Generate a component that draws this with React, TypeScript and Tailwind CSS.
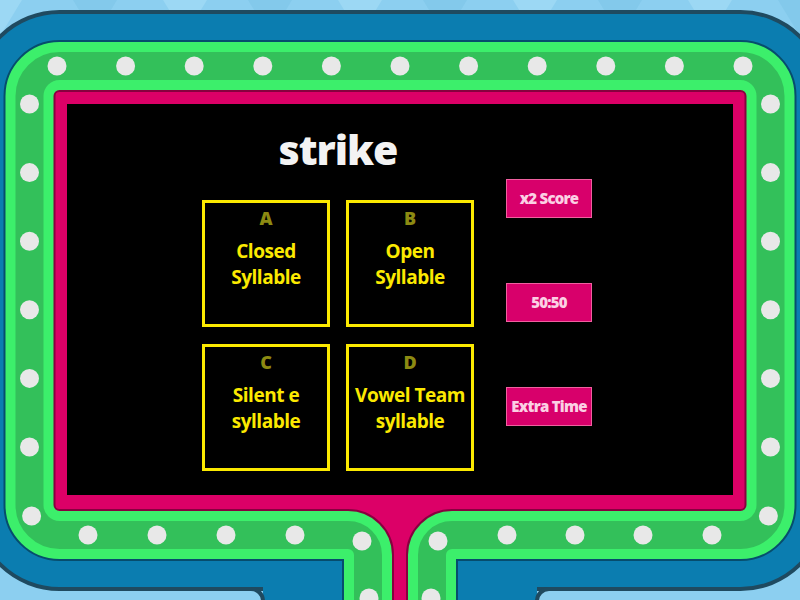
import React from 'react';

// Centre line of the lamp strip, with the stem running down under the screen
const FRAME_PATH =
  'M59.5 66 H740.5 A30 30 0 0 1 770.5 96 V505 A30 30 0 0 1 740.5 535 H452 A20 20 0 0 0 432 555 V700 H368 V555 A20 20 0 0 0 348 535 H59.5 A30 30 0 0 1 29.5 505 V96 A30 30 0 0 1 59.5 66 Z';

const ROW = [104, 172.6, 241.2, 309.8, 378.4, 447];

const DOTS: [number, number][] = [
  ...[57, 125.6, 194.2, 262.8, 331.4, 400, 468.6, 537.2, 605.8, 674.4, 743].map(
    (x) => [x, 66] as [number, number]
  ),
  ...ROW.map((y) => [29.5, y] as [number, number]),
  ...ROW.map((y) => [770.5, y] as [number, number]),
  [31.6, 516],
  [768.4, 516],
  ...[88, 157, 226, 295, 507, 575, 643, 712].map((x) => [x, 535] as [number, number]),
  [362, 541],
  [438, 541],
  [369, 598],
  [431, 598],
];

const Frame: React.FC = () => (
  <svg className="absolute inset-0" width="800" height="600" viewBox="0 0 800 600">
    {/* faint spikes in the sky */}
    {[0, 95, 185, 270, 360, 445, 535, 620, 710, 800].map((x, i) => (
      <polygon
        key={x}
        points={`${x - 22},0 ${x + 22},0 ${x},36`}
        fill={i % 2 ? '#7fc6e8' : '#a3dcf5'}
        opacity="0.7"
      />
    ))}

    <path d={FRAME_PATH} fill="none" stroke="#1f4a60" strokeWidth="112" />
    <path d={FRAME_PATH} fill="none" stroke="#0b7db0" strokeWidth="104" />

    {/* blue under the stem, with sky corners */}
    <rect x="263" y="540" width="274" height="80" fill="#0b7db0" />
    <path d="M70 589 H251 A12 12 0 0 1 263 601 V620 H70 Z" fill="#8ccff0" />
    <path d="M70 589 H251 A12 12 0 0 1 263 601 V620" fill="none" stroke="#1f4a60" strokeWidth="4" />
    <path d="M730 589 H549 A12 12 0 0 0 537 601 V620 H730 Z" fill="#8ccff0" />
    <path d="M730 589 H549 A12 12 0 0 0 537 601 V620" fill="none" stroke="#1f4a60" strokeWidth="4" />

    <path d={FRAME_PATH} fill="#dc0067" />
    <path d={FRAME_PATH} fill="none" stroke="#000" strokeOpacity="0.38" strokeWidth="52" />
    <path d={FRAME_PATH} fill="none" stroke="#3cef6b" strokeWidth="48" />
    <path d={FRAME_PATH} fill="none" stroke="#33c05a" strokeWidth="28" />

    {DOTS.map(([cx, cy]) => (
      <circle key={`${cx}-${cy}`} cx={cx} cy={cy} r="9.5" fill="#e8e8e8" />
    ))}
  </svg>
);

const answers = [
  { key: 'A', lines: ['Closed', 'Syllable'] },
  { key: 'B', lines: ['Open', 'Syllable'] },
  { key: 'C', lines: ['Silent e', 'syllable'] },
  { key: 'D', lines: ['Vowel Team', 'syllable'] },
];

const powerUps = ['x2 Score', '50:50', 'Extra Time'];

export default function App() {
  return (
    <div
      className="relative w-[800px] h-[600px] overflow-hidden bg-[#8ccff0]"
      style={{ fontFamily: '"Open Sans", "Liberation Sans", sans-serif' }}
    >
      <Frame />

      <div className="relative pl-[67px] pt-[104px]">
        <div className="w-[666px] h-[391px] bg-black flex pl-[135px]">
          {/* Question + answers */}
          <div className="flex flex-col w-[272px]">
            <h1 className="pt-[24px] text-center text-[41px] leading-[42px] font-extrabold text-[#f3f3f3] tracking-tight">
              strike
            </h1>
            <div className="mt-[30px] grid grid-cols-[128px_128px] gap-x-4 gap-y-[17px]">
              {answers.map((a) => (
                <button
                  key={a.key}
                  className="h-[127px] border-[3px] border-[#fbe900] flex flex-col items-center pt-[6px] pb-[24px]"
                >
                  <span className="text-[18px] leading-[18px] font-extrabold text-[#8c8a12]">{a.key}</span>
                  <span className="flex-1 flex flex-col items-center justify-center text-[19px] leading-[26px] font-bold text-[#fbe900] tracking-tight">
                    {a.lines.map((l) => (
                      <span key={l} className="whitespace-nowrap">{l}</span>
                    ))}
                  </span>
                </button>
              ))}
            </div>
          </div>

          {/* Power-ups */}
          <div className="flex flex-col gap-[65px] pl-[32px] pt-[75px]">
            {powerUps.map((p) => (
              <button
                key={p}
                className="w-[86px] h-[39px] bg-[#d8006b] border-[1.5px] border-[#f0609f] flex items-center justify-center text-[15px] font-extrabold text-[#fbd0e4] tracking-tighter whitespace-nowrap"
              >
                {p}
              </button>
            ))}
          </div>
        </div>
      </div>
    </div>
  );
}
